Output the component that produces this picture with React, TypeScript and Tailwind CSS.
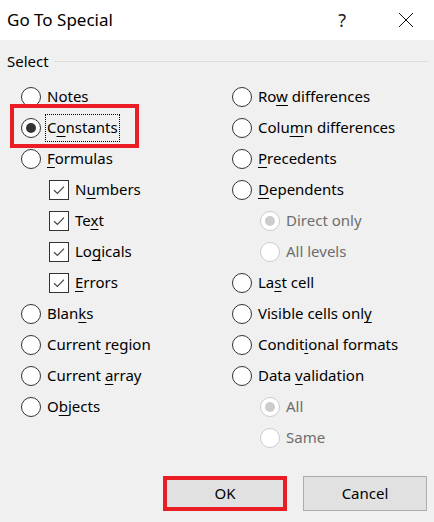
import React from "react";

type Item = {
  label: string;
  key?: number; // index of access key letter
  kind: "radio" | "check";
  checked?: boolean;
  disabled?: boolean;
  indent?: boolean;
  focus?: boolean;
};

function Label({ text, k }: { text: string; k?: number }) {
  if (k === undefined) return <>{text}</>;
  return (
    <>
      {text.slice(0, k)}
      <span className="underline decoration-1 underline-offset-[3px]">{text[k]}</span>
      {text.slice(k + 1)}
    </>
  );
}

function Radio({ checked, disabled }: { checked?: boolean; disabled?: boolean }) {
  return (
    <span
      className={`flex h-[20px] w-[20px] shrink-0 items-center justify-center rounded-full border bg-white ${
        disabled ? "border-[#cccccc]" : "border-[#333333]"
      }`}
    >
      {checked && (
        <span className={`h-[10px] w-[10px] rounded-full ${disabled ? "bg-[#cccccc]" : "bg-[#333333]"}`} />
      )}
    </span>
  );
}

function Check() {
  return (
    <span className="flex h-[20px] w-[20px] shrink-0 items-center justify-center border border-[#333333] bg-white">
      <svg width="14" height="14" viewBox="0 0 14 14" fill="none">
        <path d="M2 7.2 L5.4 10.4 L12 3.6" stroke="#444444" strokeWidth="1.2" />
      </svg>
    </span>
  );
}

function Row({ item }: { item: Item }) {
  return (
    <div className={`flex h-[31px] items-center ${item.indent ? "pl-[28px]" : ""}`}>
      {item.kind === "radio" ? <Radio checked={item.checked} disabled={item.disabled} /> : <Check />}
      {item.focus ? (
        <span className="ml-[4px] flex h-[28px] items-center border border-dotted border-black px-[1px]">
          <Label text={item.label} k={item.key} />
        </span>
      ) : (
        <span className={`ml-[6px] ${item.disabled ? "text-[#6d6d6d]" : ""}`}>
          <Label text={item.label} k={item.key} />
        </span>
      )}
    </div>
  );
}

const left: Item[] = [
  { label: "Notes", kind: "radio" },
  { label: "Constants", key: 1, kind: "radio", checked: true, focus: true },
  { label: "Formulas", key: 0, kind: "radio" },
  { label: "Numbers", key: 1, kind: "check", indent: true },
  { label: "Text", key: 2, kind: "check", indent: true },
  { label: "Logicals", key: 2, kind: "check", indent: true },
  { label: "Errors", key: 0, kind: "check", indent: true },
  { label: "Blanks", key: 4, kind: "radio" },
  { label: "Current region", key: 8, kind: "radio" },
  { label: "Current array", key: 8, kind: "radio" },
  { label: "Objects", key: 1, kind: "radio" },
];

const right: Item[] = [
  { label: "Row differences", key: 2, kind: "radio" },
  { label: "Column differences", key: 4, kind: "radio" },
  { label: "Precedents", key: 0, kind: "radio" },
  { label: "Dependents", key: 0, kind: "radio" },
  { label: "Direct only", kind: "radio", indent: true, disabled: true, checked: true },
  { label: "All levels", kind: "radio", indent: true, disabled: true },
  { label: "Last cell", key: 2, kind: "radio" },
  { label: "Visible cells only", key: 17, kind: "radio" },
  { label: "Conditional formats", key: 6, kind: "radio" },
  { label: "Data validation", key: 5, kind: "radio" },
  { label: "All", kind: "radio", indent: true, disabled: true, checked: true },
  { label: "Same", kind: "radio", indent: true, disabled: true },
];

export default function App() {
  return (
    <div className="relative h-[522px] w-[434px] overflow-hidden bg-[#f0f0f0] font-['Noto_Sans',sans-serif] text-[15px] text-black">
      <div className="flex h-[40px] items-center bg-white pl-[7px]">
        <span className="text-[17px]">Go To Special</span>
        <span className="ml-auto mr-[52px] text-[18px] text-[#222]">?</span>
        <svg className="mr-[20px]" width="16" height="16" viewBox="0 0 16 16">
          <path d="M1 1 L15 15 M15 1 L1 15" stroke="#111" strokeWidth="1" />
        </svg>
      </div>

      <div className="flex h-[41px] items-center pl-[7px] pr-[6px] pt-[1px]">
        <span>Select</span>
        <span className="ml-[5px] h-px flex-1 bg-[#dcdcdc]" />
      </div>

      <div className="grid grid-cols-[211px_1fr] pl-[21px]">
        <div className="flex flex-col">
          {left.map((it) => (
            <Row key={it.label} item={it} />
          ))}
        </div>
        <div className="flex flex-col">
          {right.map((it) => (
            <Row key={it.label} item={it} />
          ))}
        </div>
      </div>

      <div className="mt-[23px] flex justify-end gap-[16px] pr-[7px]">
        <button className="flex h-[35px] w-[124px] items-center justify-center border-[4px] border-[#ea1c24] bg-[#e1e1e1]">
          OK
        </button>
        <button className="flex h-[35px] w-[124px] items-center justify-center border border-[#adadad] bg-[#e1e1e1]">
          Cancel
        </button>
      </div>

      <div className="pointer-events-none absolute left-[10px] top-[104px] h-[44px] w-[129px] border-[4px] border-[#ea1c24]" />
    </div>
  );
}
